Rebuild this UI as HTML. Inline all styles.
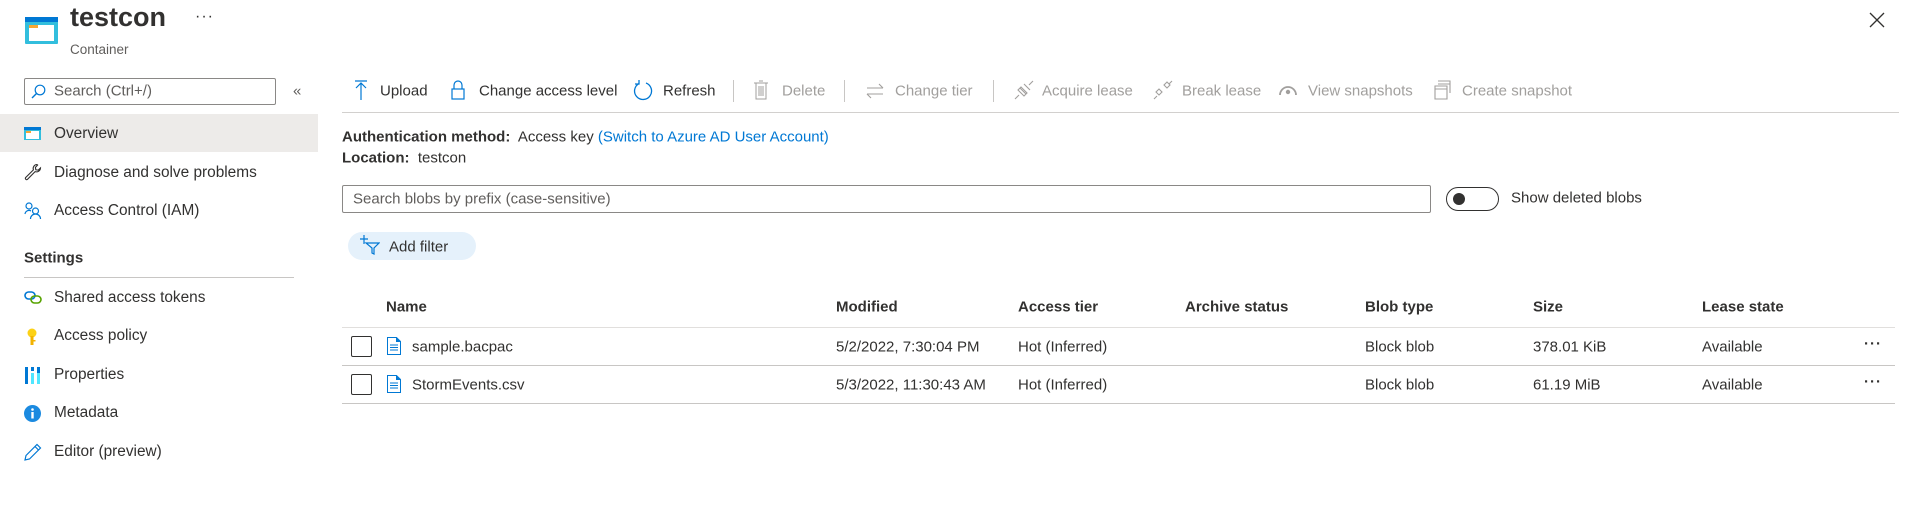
<!DOCTYPE html>
<html><head><meta charset="utf-8"><style>
*{margin:0;padding:0;box-sizing:border-box}
body{width:1920px;height:520px;background:#fff;font-family:"Liberation Sans",Arial,sans-serif;color:#323130;position:relative;overflow:hidden;font-size:15px}
.a{position:absolute;white-space:nowrap}
.m{transform:translateY(-50%)}
.dis{color:#a19f9d}
.blue{color:#0078d4}
.sb{font-size:15.4px}
svg{display:block}
</style></head><body>
<!-- header -->
<svg class="a" style="left:25px;top:17px" width="33" height="27" viewBox="0 0 33 27"><rect width="33" height="27" rx="1" fill="#32bedd"/><rect width="33" height="5" fill="#0078d4"/><rect x="4" y="8" width="25" height="16" fill="#fff"/><rect x="4" y="8" width="9" height="3" fill="#f7a734"/></svg>
<div class="a" style="left:70px;top:2px;font-size:27px;font-weight:bold;color:#323130">testcon</div>
<div class="a" style="left:195px;top:8px;font-size:16px;letter-spacing:1px">···</div>
<div class="a" style="left:70px;top:42px;font-size:13.5px;color:#605e5c">Container</div>
<svg class="a" style="left:1869px;top:12px" width="16" height="16" viewBox="0 0 16 16"><path d="M1 1L15 15M15 1L1 15" stroke="#323130" stroke-width="1.3"/></svg>

<!-- sidebar -->
<div class="a" style="left:24px;top:78px;width:252px;height:27px;border:1px solid #8a8886;border-radius:2px"></div>
<svg class="a" style="left:31px;top:84px" width="15" height="15" viewBox="0 0 15 15"><circle cx="9" cy="6" r="4.8" fill="none" stroke="#0078d4" stroke-width="1.2"/><path d="M5.5 9.5L1 14" stroke="#0078d4" stroke-width="1.4"/></svg>
<div class="a m" style="left:54px;top:91px;color:#605e5c">Search (Ctrl+/)</div>
<div class="a m" style="left:293px;top:91px;color:#605e5c;font-size:15px">«</div>
<div class="a" style="left:0;top:114px;width:318px;height:38px;background:#edebe9"></div>
<svg class="a" style="left:24px;top:127px" width="17" height="13" viewBox="0 0 17 13"><rect width="17" height="13" fill="#32bedd"/><rect width="17" height="3" fill="#0078d4"/><rect x="2" y="4" width="13" height="8" fill="#fff"/><rect x="2" y="4" width="5" height="2" fill="#f7a734"/></svg>
<div class="a m sb" style="left:54px;top:134px">Overview</div>
<svg class="a" style="left:24px;top:163px" width="18" height="18" viewBox="0 0 18 18"><path d="M13 1.5a4 4 0 0 0-3.6 5.4L1.6 14.6a1.3 1.3 0 0 0 1.8 1.8l7.7-7.8A4 4 0 0 0 16.5 5l-2.3 2.2-2.4-.4-.4-2.4L13.6 2z" fill="none" stroke="#323130" stroke-width="1.1"/></svg>
<div class="a m sb" style="left:54px;top:173px">Diagnose and solve problems</div>
<svg class="a" style="left:24px;top:202px" width="18" height="18" viewBox="0 0 18 18"><circle cx="5" cy="4" r="3" fill="none" stroke="#0078d4" stroke-width="1.2"/><path d="M1 12a4 4 0 0 1 6-3" fill="none" stroke="#0078d4" stroke-width="1.2"/><circle cx="11.5" cy="9" r="3" fill="none" stroke="#0078d4" stroke-width="1.2"/><path d="M6.5 17a5 5 0 0 1 10 0" fill="none" stroke="#0078d4" stroke-width="1.2"/></svg>
<div class="a m sb" style="left:54px;top:211px">Access Control (IAM)</div>
<div class="a m" style="left:24px;top:258px;font-weight:bold;color:#323130;font-size:15px">Settings</div>
<div class="a" style="left:24px;top:277px;width:270px;height:1px;background:#c8c6c4"></div>
<svg class="a" style="left:24px;top:291px" width="19" height="13" viewBox="0 0 19 13"><rect x="1" y="1" width="10" height="7" rx="3.5" fill="none" stroke="#0078d4" stroke-width="1.6"/><rect x="7" y="5" width="10" height="7" rx="3.5" fill="none" stroke="#57a300" stroke-width="1.6"/></svg>
<div class="a m sb" style="left:54px;top:298px">Shared access tokens</div>
<svg class="a" style="left:26px;top:328px" width="12" height="18" viewBox="0 0 12 18"><circle cx="6" cy="5" r="4.5" fill="#fcd116"/><rect x="4.5" y="8" width="3" height="9" fill="#f2b200"/><rect x="7" y="12" width="2.5" height="1.5" fill="#f2b200"/></svg>
<div class="a m sb" style="left:54px;top:336px">Access policy</div>
<svg class="a" style="left:25px;top:367px" width="16" height="17" viewBox="0 0 16 17"><rect x="0" y="0" width="3" height="17" fill="#0078d4"/><rect x="6" y="0" width="3" height="4" fill="#0078d4"/><rect x="6" y="6" width="3" height="11" fill="#50e6ff"/><rect x="12" y="0" width="3" height="17" fill="#50e6ff"/><rect x="12" y="0" width="3" height="6" fill="#0078d4"/></svg>
<div class="a m sb" style="left:54px;top:375px">Properties</div>
<svg class="a" style="left:24px;top:405px" width="17" height="17" viewBox="0 0 17 17"><circle cx="8.5" cy="8.5" r="8.5" fill="#1b8ae0"/><circle cx="8.5" cy="4.5" r="1.3" fill="#fff"/><rect x="7.3" y="7" width="2.4" height="6.5" fill="#fff"/></svg>
<div class="a m sb" style="left:54px;top:413px">Metadata</div>
<svg class="a" style="left:24px;top:443px" width="18" height="18" viewBox="0 0 18 18"><path d="M1 17l1-4.5L13 1.5l3.5 3.5L5.5 16z M11 3.5l3.5 3.5" fill="none" stroke="#0078d4" stroke-width="1.2"/></svg>
<div class="a m sb" style="left:54px;top:452px">Editor (preview)</div>

<!-- toolbar -->
<svg class="a" style="left:355px;top:80px" width="12" height="20" viewBox="0 0 12 20"><path d="M0 1h12M6 3v17M1 8l5-5 5 5" fill="none" stroke="#0078d4" stroke-width="1.2"/></svg>
<div class="a m" style="left:380px;top:91px">Upload</div>
<svg class="a" style="left:451px;top:80px" width="14" height="20" viewBox="0 0 14 20"><path d="M3 9V5a4 4 0 0 1 8 0v4" fill="none" stroke="#0078d4" stroke-width="1.2"/><rect x="1" y="9" width="12" height="10" fill="none" stroke="#0078d4" stroke-width="1.2"/></svg>
<div class="a m" style="left:479px;top:91px">Change access level</div>
<svg class="a" style="left:633px;top:80px" width="20" height="22" viewBox="0 0 20 22"><path d="M6 3.5A8.5 8.5 0 1 0 13 3" fill="none" stroke="#0078d4" stroke-width="1.3"/><path d="M6 0v4H2" fill="none" stroke="#0078d4" stroke-width="1.3"/></svg>
<div class="a m" style="left:663px;top:91px">Refresh</div>
<div class="a" style="left:733px;top:80px;width:1px;height:22px;background:#c8c6c4"></div>
<svg class="a" style="left:754px;top:80px" width="14" height="20" viewBox="0 0 14 20"><path d="M0 3h14M5 1h4M2 3v16h10V3M5 6v10M7 6v10M9 6v10" fill="none" stroke="#a19f9d" stroke-width="1"/></svg>
<div class="a m dis" style="left:782px;top:91px">Delete</div>
<div class="a" style="left:844px;top:80px;width:1px;height:22px;background:#c8c6c4"></div>
<svg class="a" style="left:866px;top:82px" width="18" height="18" viewBox="0 0 18 18"><path d="M1 6h16M13 2l4 4M17 12H1M5 16l-4-4" fill="none" stroke="#a19f9d" stroke-width="1.1"/></svg>
<div class="a m dis" style="left:895px;top:91px">Change tier</div>
<div class="a" style="left:993px;top:80px;width:1px;height:22px;background:#c8c6c4"></div>
<svg class="a" style="left:1014px;top:80px" width="20" height="20" viewBox="0 0 20 20"><path d="M1 19l4-4M15 5l4-4M6 8l6 6M4 10l6 6 3-3-6-6zM10 4l6 6" fill="none" stroke="#a19f9d" stroke-width="1.1"/></svg>
<div class="a m dis" style="left:1042px;top:91px">Acquire lease</div>
<svg class="a" style="left:1153px;top:80px" width="20" height="20" viewBox="0 0 20 20"><path d="M1 19l3-3M16 4l3-3M3 12l3 3 3-3-3-3zM11 5l3 3 3-3-3-3z" fill="none" stroke="#a19f9d" stroke-width="1.1"/></svg>
<div class="a m dis" style="left:1182px;top:91px">Break lease</div>
<svg class="a" style="left:1279px;top:84px" width="18" height="12" viewBox="0 0 18 12"><path d="M1 11a8 8 0 0 1 16 0" fill="none" stroke="#a19f9d" stroke-width="1.8"/><circle cx="9" cy="8" r="2.2" fill="#a19f9d"/></svg>
<div class="a m dis" style="left:1308px;top:91px">View snapshots</div>
<svg class="a" style="left:1434px;top:80px" width="17" height="20" viewBox="0 0 17 20"><path d="M4 1h12v12M4 4h12M1 6h12v13H1zM1 9h12" fill="none" stroke="#a19f9d" stroke-width="1.1"/></svg>
<div class="a m dis" style="left:1462px;top:91px">Create snapshot</div>
<div class="a" style="left:342px;top:112px;width:1557px;height:1px;background:#d2d0ce"></div>

<div class="a m" style="left:342px;top:137px"><b>Authentication method:</b>&nbsp; Access key <span class="blue">(Switch to Azure AD User Account)</span></div>
<div class="a m" style="left:342px;top:158px"><b>Location:</b>&nbsp; testcon</div>

<div class="a" style="left:342px;top:185px;width:1089px;height:28px;border:1px solid #8a8886;border-radius:2px"></div>
<div class="a m" style="left:353px;top:199px;color:#605e5c">Search blobs by prefix (case-sensitive)</div>
<div class="a" style="left:1446px;top:187px;width:53px;height:24px;border:1px solid #323130;border-radius:12px"></div>
<div class="a" style="left:1453px;top:193px;width:12px;height:12px;border-radius:6px;background:#323130"></div>
<div class="a m" style="left:1511px;top:198px">Show deleted blobs</div>

<div class="a" style="left:348px;top:232px;width:128px;height:28px;border-radius:14px;background:#e5f1fb"></div>
<svg class="a" style="left:360px;top:235px" width="20" height="20" viewBox="0 0 20 20"><path d="M4 0v9M0 4h8M6 8h13l-5 5v6l-2-1v-5z" fill="none" stroke="#0078d4" stroke-width="1.2"/></svg>
<div class="a m" style="left:389px;top:247px">Add filter</div>

<!-- table -->
<div class="a m" style="left:386px;top:307px;font-weight:bold;font-size:15px">Name</div>
<div class="a m" style="left:836px;top:307px;font-weight:bold">Modified</div>
<div class="a m" style="left:1018px;top:307px;font-weight:bold">Access tier</div>
<div class="a m" style="left:1185px;top:307px;font-weight:bold">Archive status</div>
<div class="a m" style="left:1365px;top:307px;font-weight:bold">Blob type</div>
<div class="a m" style="left:1533px;top:307px;font-weight:bold">Size</div>
<div class="a m" style="left:1702px;top:307px;font-weight:bold">Lease state</div>
<div class="a" style="left:342px;top:327px;width:1553px;height:1px;background:#e1dfdd"></div>
<div class="a" style="left:342px;top:365px;width:1553px;height:1px;background:#c8c6c4"></div>
<div class="a" style="left:342px;top:403px;width:1553px;height:1px;background:#c8c6c4"></div>

<div class="a" style="left:351px;top:336px;width:21px;height:21px;border:1px solid #323130;border-radius:2px"></div>
<svg class="a" style="left:387px;top:337px" width="14" height="18" viewBox="0 0 14 18"><path d="M.5.5h9l4 4v13H.5z" fill="#fff" stroke="#0078d4"/><path d="M9 .5v4.5h4.5z" fill="#0078d4"/><path d="M3 8h8M3 10.5h8M3 13h8" stroke="#0078d4"/></svg>
<div class="a m" style="left:412px;top:347px">sample.bacpac</div>
<div class="a m" style="left:836px;top:347px">5/2/2022, 7:30:04 PM</div>
<div class="a m" style="left:1018px;top:347px">Hot (Inferred)</div>
<div class="a m" style="left:1365px;top:347px">Block blob</div>
<div class="a m" style="left:1533px;top:347px">378.01 KiB</div>
<div class="a m" style="left:1702px;top:347px">Available</div>
<div class="a m" style="left:1864px;top:344px;font-weight:bold;letter-spacing:1px">···</div>

<div class="a" style="left:351px;top:374px;width:21px;height:21px;border:1px solid #323130;border-radius:2px"></div>
<svg class="a" style="left:387px;top:375px" width="14" height="18" viewBox="0 0 14 18"><path d="M.5.5h9l4 4v13H.5z" fill="#fff" stroke="#0078d4"/><path d="M9 .5v4.5h4.5z" fill="#0078d4"/><path d="M3 8h8M3 10.5h8M3 13h8" stroke="#0078d4"/></svg>
<div class="a m" style="left:412px;top:385px">StormEvents.csv</div>
<div class="a m" style="left:836px;top:385px">5/3/2022, 11:30:43 AM</div>
<div class="a m" style="left:1018px;top:385px">Hot (Inferred)</div>
<div class="a m" style="left:1365px;top:385px">Block blob</div>
<div class="a m" style="left:1533px;top:385px">61.19 MiB</div>
<div class="a m" style="left:1702px;top:385px">Available</div>
<div class="a m" style="left:1864px;top:382px;font-weight:bold;letter-spacing:1px">···</div>
</body></html>
